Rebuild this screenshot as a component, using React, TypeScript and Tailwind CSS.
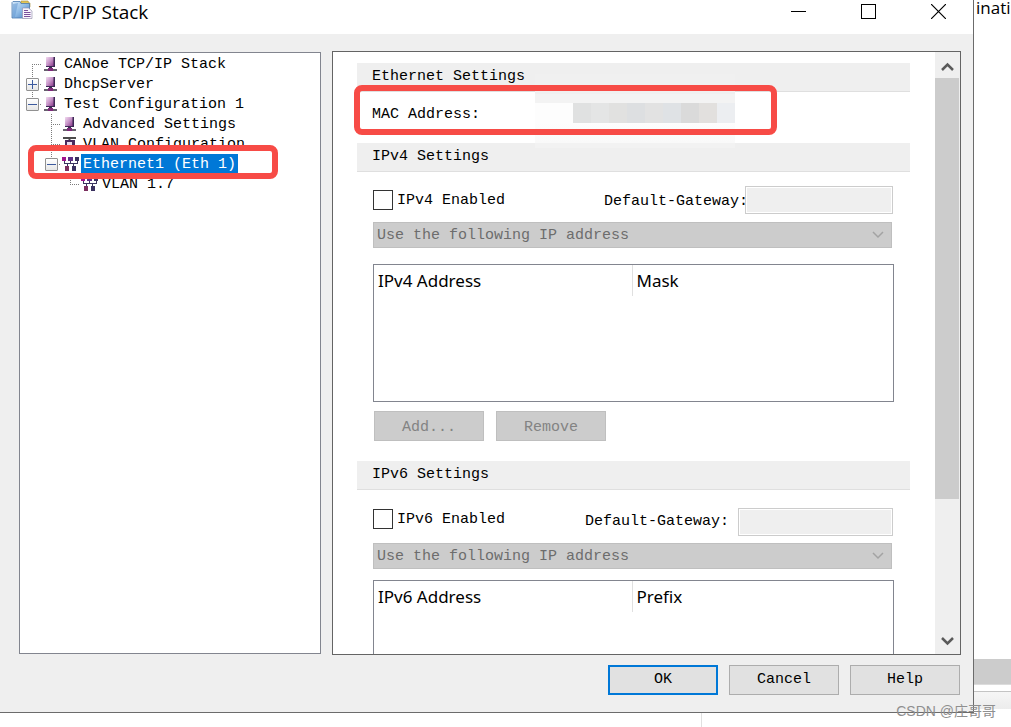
import { useState } from "react";

type NodeIcon = "pc" | "vlan" | "net";

type TreeRow = {
  id: string;
  label: string;
  icon: NodeIcon;
  level: number;
  // line above / line below the elbow
  up: boolean;
  down: boolean;
  box?: "plus" | "minus";
};

const TREE: TreeRow[] = [
  { id: "stack", label: "CANoe TCP/IP Stack", icon: "pc", level: 0, up: false, down: true },
  { id: "dhcp", label: "DhcpServer", icon: "pc", level: 0, up: true, down: true, box: "plus" },
  { id: "test", label: "Test Configuration 1", icon: "pc", level: 0, up: true, down: false, box: "minus" },
  { id: "adv", label: "Advanced Settings", icon: "pc", level: 1, up: true, down: true },
  { id: "vlancfg", label: "VLAN Configuration", icon: "vlan", level: 1, up: true, down: true },
  { id: "eth1", label: "Ethernet1 (Eth 1)", icon: "net", level: 1, up: true, down: false, box: "minus" },
  { id: "vlan17", label: "VLAN 1.7", icon: "net", level: 2, up: true, down: false },
];

const MOSAIC = [
  "bg-[#e0e1e1]",
  "bg-[#e4e5e5]",
  "bg-[#e1e1e0]",
  "bg-[#dddfe1]",
  "bg-[#e2e2e2]",
  "bg-[#dfe2e5]",
  "bg-[#dadada]",
  "bg-[#e2e0de]",
  "bg-[#eceef1]",
];

function FolderIcon() {
  return (
    <svg width="22" height="19" viewBox="0 0 22 19">
      <defs>
        <linearGradient id="folder" x1="0" y1="0" x2="1" y2="1">
          <stop offset="0" stopColor="#d8eafa" />
          <stop offset="0.5" stopColor="#8fbbe6" />
          <stop offset="1" stopColor="#3f78bd" />
        </linearGradient>
      </defs>
      <path d="M10 1h7l1 2h1v4h-9z" fill="#e3c65a" stroke="#a58a35" strokeWidth="0.6" />
      <path d="M1 2.5l1-1h7l1 2H18.500V17l-1 1H1z" fill="url(#folder)" stroke="#4a7ab0" strokeWidth="0.8" />
      <path d="M2 4l5-1-3 14H2z" fill="#5d93cf" opacity="0.5" />
      <path d="M11.5 8h6l3.500 3v7.500h-9.500z" fill="#f7f5fc" stroke="#8e8aa8" strokeWidth="0.6" />
      <path d="M13 10.5h4M13 12.5h6.5M13 14.5h6.5M13 16.5h6.5" stroke="#7a4f9c" strokeWidth="1" />
    </svg>
  );
}

function TreeIcon({ name }: { name: NodeIcon }) {
  if (name === "net") {
    return (
      <svg width="17" height="16" viewBox="0 0 17 16" shapeRendering="crispEdges">
        <path d="M2 5v2.500h13V5M8.500 5v3M5.500 8v3M11.500 8v3" fill="none" stroke="#3b3560" />
        <path d="M0 1h4v4H0z" fill="#a0148c" />
        <path d="M6 1h5v4H6z" fill="#5e2f87" />
        <path d="M13 1h4v4h-4z" fill="#39305f" />
        <path d="M3 10h4v5H3z" fill="#7b2f5f" />
        <path d="M10 10h4v5h-4z" fill="#39305f" />
      </svg>
    );
  }

  if (name === "vlan") {
    return (
      <svg width="15" height="16" viewBox="0 0 15 16">
        <path d="M0 2h13M6.500 2V5" stroke="#4b4b4b" strokeWidth="2" />
        <path d="M2 4h10v9H2z" fill="#4a2a5e" />
        <path d="M4 6h5v5H4z" fill="#e9dcef" />
        <path d="M0 14h13" stroke="#4b4b4b" strokeWidth="2" />
      </svg>
    );
  }

  return (
    <svg width="15" height="16" viewBox="0 0 15 16">
      <defs>
        <linearGradient id="screen" x1="0" y1="0" x2="1" y2="1">
          <stop offset="0" stopColor="#f3dcf1" />
          <stop offset="0.5" stopColor="#c896c9" />
          <stop offset="1" stopColor="#8a3a8c" />
        </linearGradient>
      </defs>
      <path d="M2 1h9v10H2z" fill="#3c2a55" />
      <path d="M2 1h7.500v9H2z" fill="url(#screen)" />
      <path d="M5 11h3v2H5z" fill="#3c2a55" />
      <path d="M0 13h13v2H0z" fill="#67606f" />
      <path d="M4 12h5v3H4z" fill="#7c2a78" />
    </svg>
  );
}

function Branch({ row }: { row: TreeRow }) {
  return (
    <span className="relative flex h-5 w-[19px] shrink-0 items-center justify-center">
      <svg width="19" height="20" viewBox="0 0 19 20" className="absolute inset-0" shapeRendering="crispEdges">
        {row.up && <path d="M9.500 0V10" stroke="#7c7c7c" strokeDasharray="1 1" />}
        {row.down && <path d="M9.500 10V20" stroke="#7c7c7c" strokeDasharray="1 1" />}
        <path d="M9 10.500H19" stroke="#7c7c7c" strokeDasharray="1 1" />
      </svg>
      {row.box && (
        <button
          type="button"
          aria-label={row.box === "plus" ? `Expand ${row.label}` : `Collapse ${row.label}`}
          className="relative flex h-[13px] w-[13px] items-center justify-center rounded-[1px] border border-[#919191] bg-linear-to-b from-white to-[#e6e6e6]"
        >
          <svg width="9" height="9" viewBox="0 0 9 9" shapeRendering="crispEdges" className="shrink-0">
            <path d={row.box === "plus" ? "M0 4.500H9M4.500 0V9" : "M0 4.500H9"} stroke="#3c5a9e" />
          </svg>
        </button>
      )}
    </span>
  );
}

function Band({ children }: { children: string }) {
  return (
    <h2 className="h-[29px] shrink-0 border-b border-[#dfdfdf] bg-[#efefef] pl-[15px] text-[15px] leading-7">
      {children}
    </h2>
  );
}

type IpSectionProps = {
  version: string;
  second: string;
  rowClass: string;
  gatewayClass: string;
  inputClass: string;
  selectClass: string;
  tableClass: string;
};

function IpSection({ version, second, rowClass, gatewayClass, inputClass, selectClass, tableClass }: IpSectionProps) {
  const [enabled, setEnabled] = useState(false);

  return (
    <>
      <div className={`flex shrink-0 ${rowClass}`}>
        <label className="flex h-[22px] items-center gap-1">
          <input
            type="checkbox"
            checked={enabled}
            onChange={(e) => setEnabled(e.target.checked)}
            className="h-5 w-5 appearance-none border border-[#333] bg-white checked:bg-[#333]"
          />
          <span className="pt-[2px]">{version} Enabled</span>
        </label>
        <label htmlFor={`${version}-gateway`} className={`ml-auto ${gatewayClass}`}>
          Default-Gateway:
        </label>
        <input
          id={`${version}-gateway`}
          type="text"
          disabled
          className={`h-7 border border-[#cccccc] bg-[#efefef] shadow-[inset_0_0_0_1px_white] ${inputClass}`}
        />
      </div>

      <div className={`relative mr-[2px] shrink-0 ${selectClass}`}>
        <select
          aria-label={`${version} address mode`}
          disabled
          className="block h-[26px] w-full appearance-none border border-[#bfbfbf] bg-[#cccccc] pt-[2px] pl-[3px] text-[#6d6d6d] opacity-100"
        >
          <option>Use the following IP address</option>
        </select>
        <svg width="12" height="8" viewBox="0 0 12 8" className="pointer-events-none absolute top-[9px] right-2">
          <path d="M1 1l5 5 5-5" fill="none" stroke="#a3a3a3" strokeWidth="1.5" />
        </svg>
      </div>

      <div className={`shrink-0 border border-[#82858f] bg-white ${tableClass}`}>
        <table className="w-full table-fixed font-['Noto_Sans',sans-serif] text-[17px] leading-[31px]">
          <thead>
            <tr className="text-left">
              <th className="w-[258px] border-r border-[#e0e0e0] py-0 pl-1 font-normal">{version} Address</th>
              <th className="py-0 pl-1 font-normal">{second}</th>
            </tr>
          </thead>
        </table>
      </div>
    </>
  );
}

export default function App() {
  const [selected, setSelected] = useState("eth1");

  return (
    <div className="relative flex h-screen flex-col overflow-hidden bg-white font-['Liberation_Mono',monospace] text-[15px] leading-5 text-black">
      <div className="flex min-h-0 flex-1">
        <div className="flex min-w-0 flex-1 flex-col border-r border-b border-[#6b6b6b] bg-[#efefef]">
          <header className="flex h-[34px] shrink-0 items-start bg-white pl-[11px]">
            <div className="flex flex-1 items-start gap-[6px]">
              <FolderIcon />
              <h1 className="font-['Open_Sans',sans-serif] text-[19px] leading-6">TCP/IP Stack</h1>
            </div>
            <button type="button" aria-label="Minimize" className="flex h-[23px] w-[70px] items-center justify-center">
              <svg width="15" height="15" viewBox="0 0 15 15" shapeRendering="crispEdges">
                <path d="M0 7.500h15" stroke="#000" />
              </svg>
            </button>
            <button type="button" aria-label="Maximize" className="flex h-[23px] w-[70px] items-center justify-center">
              <svg width="15" height="15" viewBox="0 0 15 15" shapeRendering="crispEdges">
                <path d="M.5.5h14v14H.5z" fill="none" stroke="#000" />
              </svg>
            </button>
            <button type="button" aria-label="Close" className="flex h-[23px] w-[70px] items-center justify-center">
              <svg width="15" height="15" viewBox="0 0 15 15">
                <path d="M0 0l15 15M15 0L0 15" stroke="#000" strokeWidth="1.2" />
              </svg>
            </button>
          </header>

          <main className="flex min-h-0 flex-1 gap-[11px] pt-[17px] pr-3 pl-[19px]">
            <nav
              aria-label="Configuration"
              className="relative my-px w-[302px] shrink-0 border border-[#82858f] bg-white pt-px pl-[3px]"
            >
              <ul>
                {TREE.map((row) => (
                  <li key={row.id} className="flex h-5 items-center">
                    {row.level > 0 && <span className="w-[19px] shrink-0" />}
                    {row.level > 1 && <span className="w-[19px] shrink-0" />}
                    <Branch row={row} />
                    <span className="flex w-[19px] shrink-0 justify-center">
                      <TreeIcon name={row.icon} />
                    </span>
                    <button
                      type="button"
                      onClick={() => setSelected(row.id)}
                      className={`ml-px px-[2px] pt-[2px] leading-[18px] whitespace-nowrap ${
                        selected === row.id ? "bg-[#0078d7] text-white" : ""
                      }`}
                    >
                      {row.label}
                    </button>
                  </li>
                ))}
              </ul>
              {/* highlight frame round the selected port */}
              <div className="pointer-events-none absolute top-[92px] left-2 h-[34px] w-[250px] rounded-lg border-6 border-[#f74b46]" />
            </nav>

            <section className="flex min-w-0 flex-1 border border-[#646464] bg-white">
              <div className="relative flex min-w-0 flex-1 flex-col overflow-hidden pt-[11px] pr-[25px] pl-6">
                <Band>Ethernet Settings</Band>
                <div className="flex h-[51px] shrink-0 items-center pb-[5px] pl-[15px]">MAC Address:</div>
                <Band>IPv4 Settings</Band>
                <div className="flex shrink-0 flex-col px-4 pt-[14px] pb-5">
                  <IpSection
                    version="IPv4"
                    second="Mask"
                    rowClass="items-center mr-px"
                    gatewayClass="-mr-[3px] pt-1"
                    inputClass="w-[148px] relative"
                    selectClass="mt-2"
                    tableClass="mt-4 h-[138px]"
                  />
                  <div className="mt-[9px] ml-px flex gap-3">
                    <button
                      type="button"
                      disabled
                      className="h-[30px] w-[110px] border border-[#bfbfbf] bg-[#cccccc] pt-1 text-[#838383]"
                    >
                      Add...
                    </button>
                    <button
                      type="button"
                      disabled
                      className="h-[30px] w-[110px] border border-[#bfbfbf] bg-[#cccccc] pt-1 text-[#838383]"
                    >
                      Remove
                    </button>
                  </div>
                </div>
                <Band>IPv6 Settings</Band>
                <div className="flex shrink-0 flex-col px-4 pt-[18px]">
                  <IpSection
                    version="IPv6"
                    second="Prefix"
                    rowClass="items-start mr-px"
                    gatewayClass="mr-[9px] pt-1"
                    inputClass="w-[155px]"
                    selectClass="mt-[7px]"
                    tableClass="mt-[11px] h-[138px]"
                  />
                </div>

                {/* blurred out address value */}
                <div className="pointer-events-none absolute top-[22px] left-[202px] w-[200px]">
                  <div className="h-5 bg-[#f0f0f0]" />
                  <div className="h-[9px] bg-[#f3f3f3]" />
                  <div className="flex h-5 bg-[#fdfdfd] pl-[38px]">
                    {MOSAIC.map((tone) => (
                      <span key={tone} className={`flex-1 ${tone}`} />
                    ))}
                  </div>
                  <div className="h-5 bg-linear-to-b from-[#fdfdfd] to-[#f9f9f9]" />
                  <div className="h-[5px] bg-[#f2f2f2]" />
                </div>
                <div className="pointer-events-none absolute top-[33px] left-[21px] h-[50px] w-[423px] rounded-lg border-6 border-[#f74b46]" />
              </div>

              <div className="flex w-[25px] shrink-0 flex-col bg-[#efefef]">
                <button
                  type="button"
                  aria-label="Scroll up"
                  className="flex h-[26px] shrink-0 items-center justify-center pt-1"
                >
                  <svg width="13" height="10" viewBox="0 0 13 10">
                    <path d="M1 8l5.500-5.500L12 8" fill="none" stroke="#5a5a5a" strokeWidth="2.5" />
                  </svg>
                </button>
                <div className="min-h-0 flex-1 pr-px">
                  <div className="h-[76.5%] bg-[#cccccc]" />
                </div>
                <button
                  type="button"
                  aria-label="Scroll down"
                  className="flex h-[26px] shrink-0 items-center justify-center"
                >
                  <svg width="13" height="10" viewBox="0 0 13 10">
                    <path d="M1 2l5.500 5.500L12 2" fill="none" stroke="#5a5a5a" strokeWidth="2.5" />
                  </svg>
                </button>
              </div>
            </section>
          </main>

          <footer className="flex shrink-0 justify-end gap-[11px] pt-[10px] pr-[13px] pb-[17px]">
            <button type="button" className="h-[30px] w-[110px] border-2 border-[#0078d7] bg-[#e1e1e1]">
              OK
            </button>
            <button type="button" className="h-[30px] w-[110px] border border-[#adadad] bg-[#e1e1e1]">
              Cancel
            </button>
            <button type="button" className="h-[30px] w-[110px] border border-[#adadad] bg-[#e1e1e1]">
              Help
            </button>
          </footer>
        </div>

        {/* window that shows behind the dialog */}
        <aside className="flex w-[37px] shrink-0 flex-col bg-white">
          <p className="flex-1 pl-[2px] font-['Open_Sans',sans-serif] text-[17px] leading-4">inati</p>
          <div className="h-[25px] bg-[#cccccc]" />
          <div className="h-[8px] border-y border-[#dcdcdc] border-b-[#c4c4c4]" />
          <div className="mb-1 h-[17px] bg-linear-to-b from-[#f6f6f6] to-[#ececec]" />
        </aside>
      </div>

      <div className="flex h-[14px] shrink-0 justify-end">
        <div className="w-[310px] border-l border-[#e0e0e0]" />
      </div>

      <p className="pointer-events-none absolute right-[15px] bottom-[6px] font-['Liberation_Sans','Noto_Sans_CJK_SC',sans-serif] text-[14px] leading-5 text-[#8f8f8f]">
        CSDN @庄哥哥
      </p>
    </div>
  );
}
